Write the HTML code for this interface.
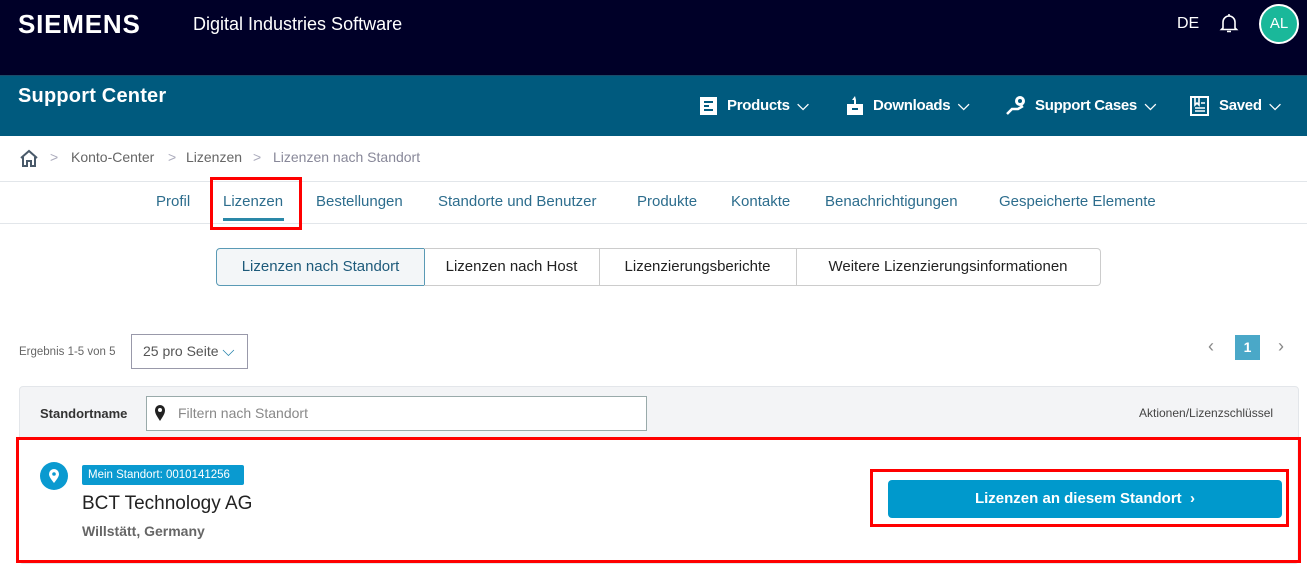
<!DOCTYPE html>
<html><head><meta charset="utf-8"><style>
*{margin:0;padding:0;box-sizing:border-box}
body{width:1307px;height:568px;overflow:hidden;background:#fff;font-family:"Liberation Sans",sans-serif;position:relative}
.a{position:absolute;white-space:nowrap}
.top{left:0;top:0;width:1307px;height:75px;background:#000028}
.teal{left:0;top:75px;width:1307px;height:61px;background:#005a7e;border-top:1px solid #1a4a68}
.nav{color:#fff;font-weight:bold;font-size:15px;letter-spacing:-0.3px;top:97px}
.tab{top:193px;font-size:15px;color:#2d6d8d;letter-spacing:0}
.st{top:248px;height:38px;line-height:36px;font-size:15px;color:#222;text-align:center;border:1px solid #ccc}
.red{border:3px solid #f00}
</style></head><body>
<div class="a top"></div>
<div class="a" style="left:18px;top:9px;color:#fff;font-weight:bold;font-size:26px;letter-spacing:0.8px">SIEMENS</div>
<div class="a" style="left:193px;top:14px;color:#fff;font-size:18px">Digital Industries Software</div>
<div class="a" style="left:1177px;top:15px;color:#fff;font-size:16px">DE</div>
<svg class="a" style="left:1218px;top:12px" width="22" height="22" viewBox="0 0 22 22"><path d="M5 16V10a6 6 0 0 1 12 0v6l1.5 1.5h-15z" fill="none" stroke="#fff" stroke-width="1.6"/><path d="M11 2v2M9 19.5h4" stroke="#fff" stroke-width="1.6"/></svg>
<div class="a" style="left:1259px;top:4px;width:40px;height:40px;border-radius:50%;background:#1ab89a;border:2px solid #fff;color:#fff;font-size:15px;text-align:center;line-height:36px">AL</div>
<div class="a teal"></div>
<div class="a" style="left:18px;top:85px;color:#fff;font-weight:bold;font-size:20px;letter-spacing:0.2px">Support Center</div>
<svg class="a" style="left:699px;top:96px" width="20" height="20"><rect x="1" y="1" width="17" height="18" fill="#fff"/><path d="M5 6h9M5 10h5M5 14h9" stroke="#005a7e" stroke-width="2"/></svg>
<div class="a nav" style="left:727px">Products &nbsp;⌵</div>
<svg class="a" style="left:845px;top:94px" width="20" height="22"><path d="M10 2l-3 4h2v4h2V6" fill="#fff"/><rect x="2" y="10" width="16" height="11" fill="#fff"/><rect x="7" y="14" width="6" height="2" fill="#005a7e"/></svg>
<div class="a nav" style="left:873px">Downloads &nbsp;⌵</div>
<svg class="a" style="left:1005px;top:94px" width="24" height="22"><circle cx="15" cy="7" r="5" fill="#fff"/><circle cx="15" cy="7" r="2" fill="#005a7e"/><path d="M2 20l5-5h6l5-3" stroke="#fff" stroke-width="2.5" fill="none"/></svg>
<div class="a nav" style="left:1035px">Support Cases &nbsp;⌵</div>
<svg class="a" style="left:1189px;top:95px" width="22" height="22"><rect x="2" y="2" width="17" height="18" fill="none" stroke="#fff" stroke-width="2"/><path d="M6 3v7l2-2 2 2V3M12 8h4M6 13h10M6 16h10" stroke="#fff" stroke-width="1.6" fill="none"/></svg>
<div class="a nav" style="left:1219px">Saved &nbsp;⌵</div>

<svg class="a" style="left:19px;top:148px" width="20" height="20"><path d="M2 10L10 3l8 7M4 9v9h4v-5h4v5h4V9" fill="none" stroke="#4a5a6a" stroke-width="2"/></svg>
<div class="a" style="left:50px;top:149px;font-size:14px;color:#aab">&gt;</div>
<div class="a" style="left:71px;top:149px;font-size:14px;color:#666">Konto-Center</div>
<div class="a" style="left:168px;top:149px;font-size:14px;color:#aab">&gt;</div>
<div class="a" style="left:186px;top:149px;font-size:14px;color:#666">Lizenzen</div>
<div class="a" style="left:253px;top:149px;font-size:14px;color:#aab">&gt;</div>
<div class="a" style="left:273px;top:149px;font-size:14px;color:#889">Lizenzen nach Standort</div>
<div class="a" style="left:0;top:181px;width:1307px;height:1px;background:#e2e6ea"></div>
<div class="a" style="left:0;top:223px;width:1307px;height:1px;background:#e2e6ea"></div>
<div class="a tab" style="left:156px">Profil</div>
<div class="a tab" style="left:223px">Lizenzen</div>
<div class="a" style="left:223px;top:218px;width:61px;height:3px;background:#2a88a8"></div>
<div class="a tab" style="left:316px">Bestellungen</div>
<div class="a tab" style="left:438px">Standorte und Benutzer</div>
<div class="a tab" style="left:637px">Produkte</div>
<div class="a tab" style="left:731px">Kontakte</div>
<div class="a tab" style="left:825px">Benachrichtigungen</div>
<div class="a tab" style="left:999px">Gespeicherte Elemente</div>
<div class="a red" style="left:210px;top:177px;width:92px;height:53px"></div>

<div class="a st" style="left:216px;width:209px;background:#f3f6f8;border-color:#5a9ab5;border-radius:4px 0 0 4px;color:#1d5a7a">Lizenzen nach Standort</div>
<div class="a st" style="left:424px;width:176px;border-left:none">Lizenzen nach Host</div>
<div class="a st" style="left:599px;width:198px;border-left:none">Lizenzierungsberichte</div>
<div class="a st" style="left:796px;width:305px;border-left:none;border-radius:0 4px 4px 0">Weitere Lizenzierungsinformationen</div>

<div class="a" style="left:19px;top:346px;font-size:11.5px;color:#666">Ergebnis 1-5 von 5</div>
<div class="a" style="left:131px;top:334px;width:117px;height:35px;border:1px solid #99a;font-size:14px;color:#555;padding:8px 0 0 11px">25 pro Seite <span style="color:#1d7ea8;font-size:16px">⌵</span></div>
<div class="a" style="left:1208px;top:336px;color:#888;font-size:18px">‹</div>
<div class="a" style="left:1235px;top:335px;width:25px;height:25px;background:#4aa8c8;color:#fff;font-weight:bold;font-size:14px;text-align:center;line-height:25px">1</div>
<div class="a" style="left:1278px;top:336px;color:#888;font-size:18px">›</div>

<div class="a" style="left:19px;top:386px;width:1280px;height:178px;background:#f3f4f6;border:1px solid #e3e6ea;border-radius:4px"></div>
<div class="a" style="left:40px;top:406px;font-size:13px;font-weight:bold;color:#333">Standortname</div>
<div class="a" style="left:146px;top:396px;width:501px;height:35px;background:#fff;border:1px solid #9aa;"></div>
<svg class="a" style="left:154px;top:404px" width="12" height="18"><path d="M6 17C2 11 1 9 1 6a5 5 0 0 1 10 0c0 3-1 5-5 11z" fill="#222"/><circle cx="6" cy="6" r="2" fill="#fff"/></svg>
<div class="a" style="left:178px;top:405px;font-size:14px;color:#888">Filtern nach Standort</div>
<div class="a" style="left:1139px;top:406px;font-size:12px;color:#444">Aktionen/Lizenzschlüssel</div>

<div class="a" style="left:19px;top:440px;width:1278px;height:120px;background:#fff"></div>
<div class="a red" style="left:16px;top:437px;width:1285px;height:126px"></div>
<div class="a" style="left:40px;top:462px;width:28px;height:28px;border-radius:50%;background:#0a9ad0"></div>
<svg class="a" style="left:48px;top:468px" width="12" height="16"><path d="M6 15C2 10 1 8 1 6a5 5 0 0 1 10 0c0 2-1 4-5 9z" fill="#fff"/><circle cx="6" cy="6" r="1.8" fill="#0a9ad0"/></svg>
<div class="a" style="left:82px;top:465px;width:162px;height:20px;background:#0a9ad0;border-radius:2px;color:#fff;font-size:11.5px;line-height:20px;padding-left:6px">Mein Standort: 0010141256</div>
<div class="a" style="left:82px;top:493px;font-size:19px;color:#222">BCT Technology AG</div>
<div class="a" style="left:82px;top:523px;font-size:14px;color:#666;font-weight:bold">Willstätt, Germany</div>
<div class="a" style="left:888px;top:480px;width:394px;height:38px;background:#0099cc;border-radius:4px;color:#fff;font-weight:bold;font-size:15px;text-align:center;line-height:38px">Lizenzen an diesem Standort &nbsp;›</div>
<div class="a red" style="left:870px;top:469px;width:419px;height:58px"></div>
</body></html>
